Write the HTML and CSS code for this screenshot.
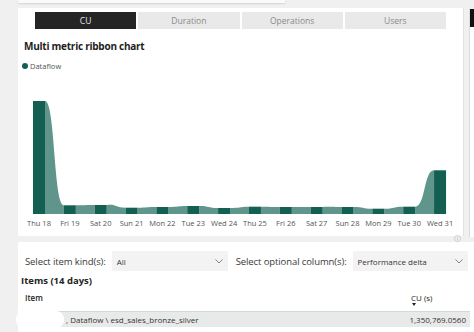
FILE: index.html
```html
<!DOCTYPE html>
<html>
<head>
<meta charset="utf-8">
<link rel="stylesheet" href="styles.css">
</head>
<body>
<div class="page">
  <div class="topstrip"></div>
  <div class="toprow">
    <section class="card chart-card">
      <div class="tabs">
        <div class="tab active">CU</div>
        <div class="tab">Duration</div>
        <div class="tab">Operations</div>
        <div class="tab">Users</div>
      </div>
      <h2 class="title">Multi metric ribbon chart</h2>
      <div class="legend"><span class="dot"></span>Dataflow</div>
      <svg class="chart" width="445" height="161" viewBox="0 0 445 161">
        <g class="ribbons">
          <path d="M27 143 L27 30 C37.4 30 35.45 134.3 45.85 134.3 L45.85 143Z"/>
          <path d="M57.85 143 L57.85 134.3 C68.25 134.3 66.3 134 76.7 134 L76.7 143Z"/>
          <path d="M88.7 143 L88.7 134 C99.1 133 97.15 136.7 107.55 136.7 L107.55 143Z"/>
          <path d="M119.55 143 L119.55 136.7 C129.95 136.7 128 136 138.4 136 L138.4 143Z"/>
          <path d="M150.4 143 L150.4 136 C160.8 136 158.85 135 169.25 135 L169.25 143Z"/>
          <path d="M181.25 143 L181.25 135 C191.65 135 189.7 137 200.1 137 L200.1 143Z"/>
          <path d="M212.1 143 L212.1 137 C222.5 137 220.55 135.7 230.95 135.7 L230.95 143Z"/>
          <path d="M242.95 143 L242.95 135.7 C253.35 135.7 251.4 136 261.8 136 L261.8 143Z"/>
          <path d="M273.8 143 L273.8 136 L292.65 136 L292.65 143Z"/>
          <path d="M304.65 143 L304.65 136 C315 135.5 313 136 323.5 136 L323.5 143Z"/>
          <path d="M335.5 143 L335.5 136 C345.9 136 343.95 137.7 354.35 137.7 L354.35 143Z"/>
          <path d="M366.35 143 L366.35 137.7 C376.75 137.7 374.8 135.7 385.2 135.7 L385.2 143Z"/>
          <path d="M397.2 143 L397.2 135.7 C407.6 135.7 405.65 99.3 416.05 99.3 L416.05 143Z"/>
        </g>
        <g class="bars">
          <rect x="15" y="30" width="12" height="113"/>
          <rect x="45.85" y="134.3" width="12" height="8.7"/>
          <rect x="76.7" y="134" width="12" height="9"/>
          <rect x="107.55" y="136.7" width="12" height="6.3"/>
          <rect x="138.4" y="136" width="12" height="7"/>
          <rect x="169.25" y="135" width="12" height="8"/>
          <rect x="200.1" y="137" width="12" height="6"/>
          <rect x="230.95" y="135.7" width="12" height="7.3"/>
          <rect x="261.8" y="136" width="12" height="7"/>
          <rect x="292.65" y="136" width="12" height="7"/>
          <rect x="323.5" y="136" width="12" height="7"/>
          <rect x="354.35" y="137.7" width="12" height="5.3"/>
          <rect x="385.2" y="135.7" width="12" height="7.3"/>
          <rect x="416.05" y="99.3" width="12" height="43.7"/>
        </g>
        <g class="axis">
          <text x="21" y="155">Thu 18</text>
          <text x="51.85" y="155">Fri 19</text>
          <text x="82.7" y="155">Sat 20</text>
          <text x="113.55" y="155">Sun 21</text>
          <text x="144.4" y="155">Mon 22</text>
          <text x="175.25" y="155">Tue 23</text>
          <text x="206.1" y="155">Wed 24</text>
          <text x="236.95" y="155">Thu 25</text>
          <text x="267.8" y="155">Fri 26</text>
          <text x="298.65" y="155">Sat 27</text>
          <text x="329.5" y="155">Sun 28</text>
          <text x="360.35" y="155">Mon 29</text>
          <text x="391.2" y="155">Tue 30</text>
          <text x="422.05" y="155">Wed 31</text>
        </g>
      </svg>
      <svg class="info" width="7" height="7" viewBox="0 0 7 7"><circle cx="3.5" cy="3.5" r="3" fill="none" stroke="#c4c4c4" stroke-width="0.8"/><circle cx="3.5" cy="2.2" r="0.5" fill="#c4c4c4"/><path d="M3.5 3.2 V5.2" stroke="#c4c4c4" stroke-width="0.8"/></svg>
    </section>
    <aside class="side-panel"><div class="side-head"></div></aside>
  </div>
  <section class="card table-card">
    <div class="filters">
      <span class="label">Select item kind(s):</span>
      <div class="select kind">
        <span>All</span>
        <svg class="chev" width="8" height="5" viewBox="0 0 8 5"><path d="M0.5 0.5 L4 4 L7.5 0.5" fill="none" stroke="#777" stroke-width="0.9"/></svg>
      </div>
      <span class="label">Select optional column(s):</span>
      <div class="select cols">
        <span>Performance delta</span>
        <svg class="chev" width="8" height="5" viewBox="0 0 8 5"><path d="M0.5 0.5 L4 4 L7.5 0.5" fill="none" stroke="#777" stroke-width="0.9"/></svg>
      </div>
    </div>
    <h3 class="items-title">Items (14 days)</h3>
    <div class="thead">
      <span class="col-item">Item</span>
      <span class="col-cu">CU (s)<span class="sort"></span></span>
    </div>
    <div class="trow">
      <span class="redact"></span>
      <span class="cell-name">, Dataflow \ esd_sales_bronze_silver</span>
      <span class="cell-num">1,350,769.0560</span>
    </div>
  </section>
</div>
</body>
</html>
```

FILE: styles.css
```css
* { box-sizing: border-box; margin: 0; padding: 0; }
html, body { width: 474px; height: 332px; overflow: hidden; }
body {
  background: #f0f0f0;
  font-family: "Segoe UI", "Open Sans", "Noto Sans", sans-serif;
  color: #252423;
}
.page { position: relative; padding-left: 18px; }
.topstrip {
  width: 267px;
  height: 3px;
  background: #fafafa;
  box-shadow: 0 1px 2px rgba(0,0,0,0.12);
}
.toprow {
  display: flex;
  margin-top: 5px;
  gap: 7px;
}
.card { background: #fff; }
.chart-card {
  position: relative;
  width: 445px;
  height: 228px;
  padding-top: 4px;
  box-shadow: 1px 0 0 #e2e2e2;
}
.tabs {
  display: grid;
  grid-template-columns: repeat(4, 1fr);
  gap: 2px;
  margin: 0 17px;
  height: 17px;
}
.tab {
  background: #e9e9e9;
  color: #8a8a8a;
  font-size: 8.5px;
  line-height: 17px;
  text-align: center;
}
.tab.active { background: #252525; color: #e6e6e6; }
.title {
  margin: 10px 0 0 6px;
  font-size: 10px;
  letter-spacing: -0.25px;
  line-height: 14px;
  font-weight: 700;
  color: #1e1e1e;
}
.legend {
  display: flex;
  align-items: center;
  gap: 2px;
  margin: 8px 0 0 4px;
  height: 10px;
  font-size: 7.5px;
  color: #555;
}
.dot { width: 6px; height: 6px; border-radius: 50%; background: #135f51; }
.chart { display: block; }
.ribbons path { fill: #5f958a; }
.bars rect { fill: #135f51; }
.axis text {
  font-family: "Segoe UI", "Open Sans", "Noto Sans", sans-serif;
  font-size: 7.5px;
  fill: #555;
  text-anchor: middle;
}
.info { position: absolute; right: 2px; bottom: -6px; }
.side-panel {
  width: 20px;
  height: 228px;
  background: #fff;
  border-top: 18px solid #111;
  margin-top: 1px;
  box-shadow: -1px 0 0 #ddd;
}
.table-card {
  margin-top: 5px;
  width: 460px;
  height: 100px;
  padding: 9px 0 0 0;
}
.filters {
  display: flex;
  align-items: center;
  height: 20px;
  padding-left: 7px;
}
.label { font-size: 9.5px; letter-spacing: -0.1px; color: #3b3a39; white-space: nowrap; }
.select {
  display: flex;
  align-items: center;
  justify-content: space-between;
  height: 20px;
  background: #f3f3f3;
  padding: 0 5px 0 5px;
  font-size: 8px;
  color: #333;
}
.select.kind { width: 116px; margin: 0 8px 0 6px; }
.select.cols { width: 115px; margin-left: 6px; }
.items-title {
  margin: 3px 0 0 3px;
  font-size: 9.5px;
  line-height: 14px;
  font-weight: 700;
  color: #252423;
}
.thead {
  display: flex;
  justify-content: space-between;
  height: 16px;
  line-height: 12px;
  margin: 4px 0 0 7px;
  font-size: 8px;
  font-weight: 600;
  color: #252423;
}
.col-cu {
  position: relative;
  width: 56px;
  margin-right: 11px;
  font-weight: 400;
}
.sort {
  position: absolute;
  left: 1px;
  top: 11px;
  width: 0;
  height: 0;
  border-left: 2.5px solid transparent;
  border-right: 2.5px solid transparent;
  border-top: 3px solid #222;
}
.trow {
  display: flex;
  align-items: center;
  height: 16px;
  margin: 3px 8px 0 4px;
  background: #e8eae9;
  border-top: 1px solid #d6d8d7;
  font-size: 8px;
  color: #333;
}
.redact {
  width: 48px;
  height: 17px;
  background: #fff;
  border-radius: 8px;
  margin-left: -6px;
}
.cell-name { flex: 1; margin-left: 2px; }
.cell-num { margin-right: 4px; }
```
